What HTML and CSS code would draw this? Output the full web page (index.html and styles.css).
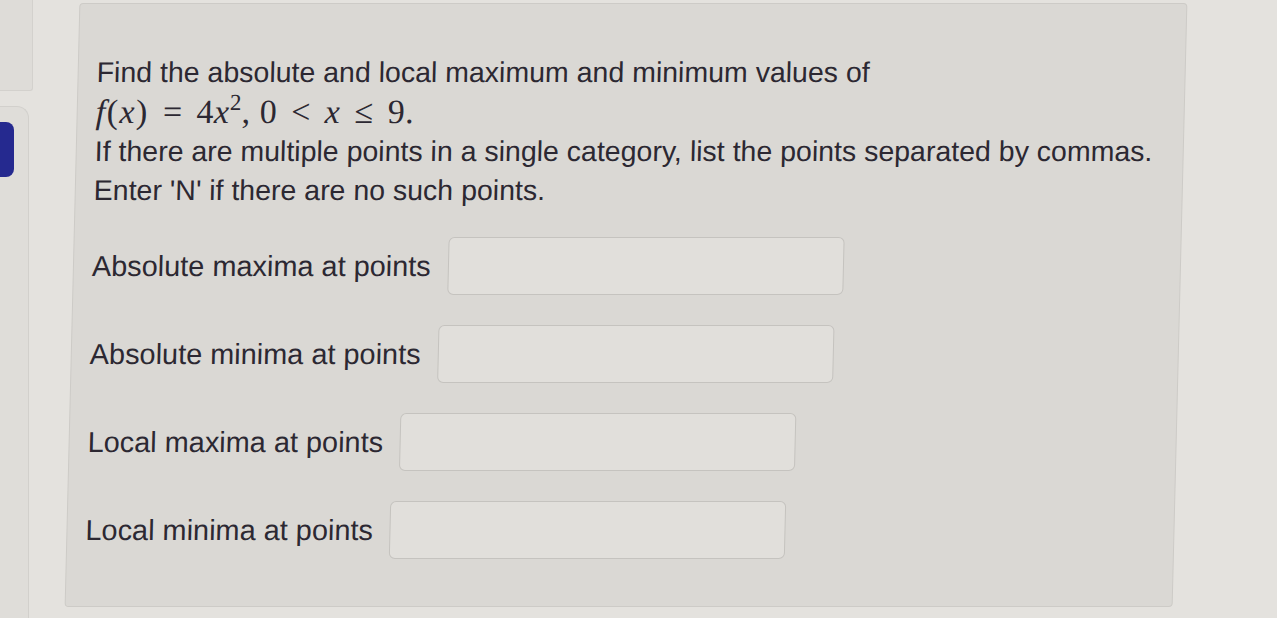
FILE: index.html
```html
<!DOCTYPE html>
<html>
<head>
<meta charset="utf-8">
<link rel="stylesheet" href="styles.css">
</head>
<body>
<div class="page">
  <aside class="sidebar">
    <div class="side-top"></div>
    <div class="side-panel">
      <div class="side-tab"></div>
    </div>
  </aside>
  <main class="main">
    <section class="card">
      <p class="line">Find the absolute and local maximum and minimum values of</p>
      <p class="line math"><i>f</i><span class="paren">(</span><i>x</i><span class="paren">)</span><span class="rel">=</span>4<i>x</i><sup>2</sup>,<span class="thin"></span>0<span class="rel">&lt;</span><i>x</i><span class="rel">≤</span>9.</p>
      <p class="line">If there are multiple points in a single category, list the points separated by commas.</p>
      <p class="line">Enter 'N' if there are no such points.</p>
      <div class="rows">
        <div class="row"><span class="label">Absolute maxima at points</span><span class="input"></span></div>
        <div class="row"><span class="label">Absolute minima at points</span><span class="input"></span></div>
        <div class="row"><span class="label">Local maxima at points</span><span class="input"></span></div>
        <div class="row"><span class="label">Local minima at points</span><span class="input"></span></div>
      </div>
    </section>
  </main>
</div>
</body>
</html>
```
FILE: styles.css
```css
html, body {
  margin: 0;
  padding: 0;
}
body {
  background: #e4e2de;
  font-family: "Liberation Sans", Arial, sans-serif;
  color: #2c2832;
  width: 1277px;
  height: 618px;
  overflow: hidden;
}
.page {
  display: flex;
  height: 618px;
}
.sidebar {
  width: 33px;
  display: flex;
  flex-direction: column;
  gap: 15px;
}
.side-top {
  height: 90px;
  background: #dedcd8;
  border-right: 1px solid #d3d1cd;
  border-bottom: 1px solid #d3d1cd;
  border-bottom-right-radius: 3px;
}
.side-panel {
  flex: 1;
  width: 28px;
  background: #dfddd9;
  border-top: 1px solid #d2d0cc;
  border-right: 1px solid #d2d0cc;
  border-top-right-radius: 12px;
  padding-top: 15px;
}
.side-tab {
  width: 14px;
  height: 55px;
  background: #25298f;
  border-radius: 0 8px 8px 0;
}
.main {
  flex: 1;
  padding: 3px 0 0 39px;
}
.card {
  width: 1108px;
  height: 604px;
  box-sizing: border-box;
  background: #dad8d4;
  border: 1px solid #cdcbc7;
  border-radius: 4px;
  padding: 49px 0 0 18px;
  transform: skewX(-1.4deg);
}
.line {
  margin: 0;
  font-size: 28.5px;
  line-height: 39px;
  white-space: nowrap;
}
.math {
  font-family: "Liberation Serif", "DejaVu Serif", serif;
  font-size: 34px;
  line-height: 40px;
  letter-spacing: 0.5px;
}
.math i {
  font-style: italic;
}
.paren {
  padding: 0 1px;
}
.math sup {
  font-size: 23px;
  line-height: 0;
  vertical-align: 13px;
}
.rel {
  display: inline-block;
  padding: 0 14px;
}
.thin {
  display: inline-block;
  width: 9px;
}
.rows {
  display: flex;
  flex-direction: column;
  gap: 30px;
  margin-top: 27px;
}
.row {
  display: flex;
  align-items: center;
  gap: 17px;
  height: 58px;
}
.label {
  font-size: 28.9px;
  white-space: nowrap;
}
.input {
  width: 394px;
  height: 56px;
  background: #e1dfdb;
  border: 1px solid #c5c3bf;
  border-radius: 6px;
}
```
